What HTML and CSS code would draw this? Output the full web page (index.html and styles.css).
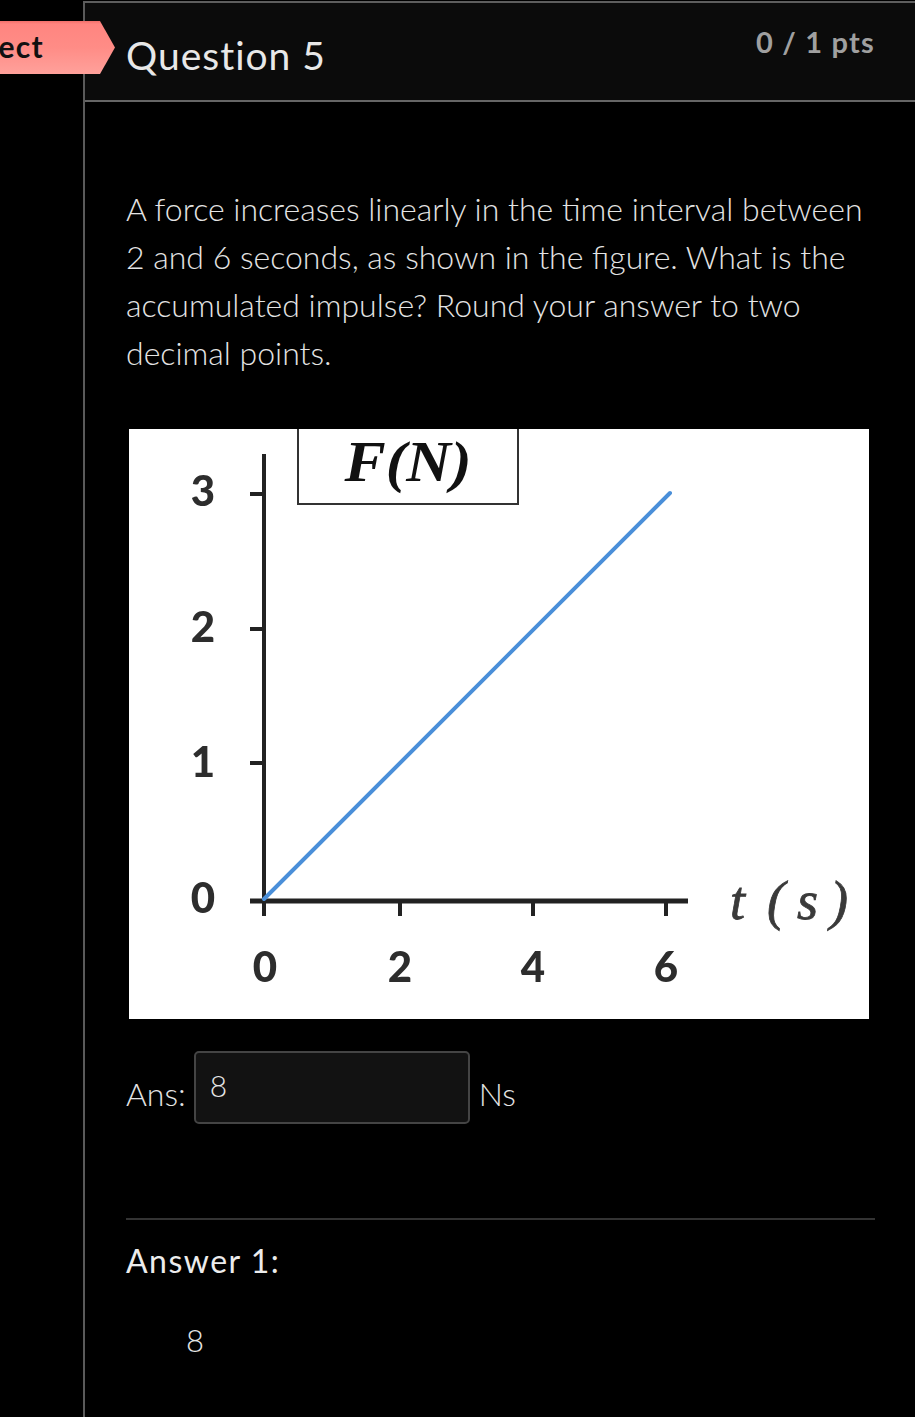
FILE: index.html
```html
<!DOCTYPE html>
<html lang="en">
<head>
<meta charset="utf-8">
<title>Question 5</title>
<link rel="stylesheet" href="styles.css">
</head>
<body>
<div class="page">
  <div class="tag"><span class="tag-text">Incorrect</span></div>
  <div class="gutter"></div>
  <div class="question">
    <div class="header">
      <h2 class="title">Question 5</h2>
      <div class="pts">0 / 1 pts</div>
    </div>
    <div class="content">
      <p class="text">A force increases linearly in the time interval between 2 and 6 seconds, as shown in the figure. What is the accumulated impulse? Round your answer to two decimal points.</p>
      <div class="figure">
        <svg class="graph" width="740" height="590" viewBox="0 0 740 590" xmlns="http://www.w3.org/2000/svg">
          <rect x="0" y="0" width="740" height="590" fill="#ffffff"/>
          <g class="blur">
            <rect x="169" y="-2" width="220" height="77" fill="none" stroke="#333" stroke-width="2"/>
            <text x="279" y="52" class="fn" text-anchor="middle" textLength="127" lengthAdjust="spacingAndGlyphs">F(N)</text>
            <line x1="135" y1="25" x2="135" y2="487" stroke="#222" stroke-width="4"/>
            <line x1="121" y1="472" x2="559" y2="472" stroke="#222" stroke-width="5"/>
            <line x1="121" y1="65" x2="135" y2="65" stroke="#222" stroke-width="4"/>
            <line x1="121" y1="200" x2="135" y2="200" stroke="#222" stroke-width="4"/>
            <line x1="121" y1="334" x2="135" y2="334" stroke="#222" stroke-width="4"/>
            <line x1="271" y1="472" x2="271" y2="487" stroke="#222" stroke-width="4"/>
            <line x1="404" y1="472" x2="404" y2="487" stroke="#222" stroke-width="4"/>
            <line x1="537" y1="472" x2="537" y2="487" stroke="#222" stroke-width="4"/>
            <line x1="135" y1="470" x2="541" y2="64" stroke="#4a8fd9" stroke-width="4" stroke-linecap="round"/>
            <text class="num" x="74" y="77" text-anchor="middle">3</text>
            <text class="num" x="74" y="213" text-anchor="middle">2</text>
            <text class="num" x="74" y="348" text-anchor="middle">1</text>
            <text class="num" x="74" y="484" text-anchor="middle">0</text>
            <text class="num" x="136" y="553" text-anchor="middle">0</text>
            <text class="num" x="271" y="553" text-anchor="middle">2</text>
            <text class="num" x="404" y="553" text-anchor="middle">4</text>
            <text class="num" x="537" y="553" text-anchor="middle">6</text>
            <text class="ts" x="601" y="490">t</text>
            <text class="ts" x="638" y="490" textLength="81" lengthAdjust="spacing">(s)</text>
          </g>
        </svg>
      </div>
      <div class="ans-row">
        <span class="label">Ans:</span>
        <div class="input">8</div>
        <span class="unit">Ns</span>
      </div>
      <hr class="divider">
      <div class="answer-title">Answer 1:</div>
      <div class="answer-value">8</div>
    </div>
  </div>
</div>
</body>
</html>
```
FILE: styles.css
```css
html, body {
  margin: 0;
  padding: 0;
  background: #000;
}
body {
  font-family: Lato, "Open Sans", sans-serif;
  color: #e6e6e6;
}
.page {
  position: relative;
  display: flex;
  min-height: 1417px;
  overflow: hidden;
}
.gutter {
  width: 83px;
  flex: none;
}
.question {
  flex: 1;
  margin-top: 1px;
  border-top: 2px solid #5e5e5e;
  border-left: 2px solid #5a5a5a;
}
.header {
  height: 97px;
  background: #0b0b0b;
  border-bottom: 2px solid #666;
  display: flex;
  justify-content: space-between;
  align-items: flex-start;
  padding: 0 40px 0 41px;
}
.title {
  margin: 0;
  padding-top: 30px;
  font-size: 39px;
  font-weight: 400;
  letter-spacing: 1px;
  line-height: 44px;
  color: #e8e8e8;
}
.pts {
  padding-top: 21px;
  font-size: 29px;
  font-weight: 700;
  letter-spacing: 1.2px;
  line-height: 36px;
  color: #a0a0a0;
}
.tag {
  position: absolute;
  left: 0;
  top: 21px;
  width: 115px;
  height: 53px;
  background: linear-gradient(#f26e69 0, #ff8580 3px, #ff8c86 50%, #ffa19b 100%);
  clip-path: polygon(0 0, 100px 0, 115px 50%, 100px 100%, 0 100%);
  display: flex;
  justify-content: flex-end;
  align-items: center;
  padding-right: 71px;
  box-sizing: border-box;
  z-index: 2;
}
.tag-text {
  white-space: nowrap;
  font-size: 30px;
  font-weight: 700;
  letter-spacing: 1.3px;
  color: #111;
  margin-top: -4px;
}
.content {
  padding: 83px 40px 0 41px;
}
.text {
  margin: 0;
  font-size: 32px;
  font-weight: 300;
  line-height: 48px;
  color: #e4e4e4;
}
.figure {
  margin: 52px 0 0 3px;
}
.graph {
  display: block;
}
.blur {
  filter: blur(0.7px);
}
.fn {
  font-family: "Liberation Serif", serif;
  font-style: italic;
  font-weight: 700;
  font-size: 56px;
  fill: #111;
}
.ts {
  font-family: "Liberation Serif", serif;
  font-style: italic;
  font-weight: 400;
  font-size: 54px;
  fill: #3a3a3a;
  stroke: #3a3a3a;
  stroke-width: 0.8px;
}
.num {
  font-family: Lato, sans-serif;
  font-weight: 900;
  font-size: 42px;
  fill: #2d2d2d;
}
.ans-row {
  display: flex;
  align-items: flex-end;
  margin-top: 32px;
}
.label, .unit {
  font-size: 32px;
  font-weight: 300;
  line-height: 48px;
  margin-bottom: 6px;
  color: #e4e4e4;
}
.label {
  margin-right: 8px;
}
.unit {
  margin-left: 9px;
}
.input {
  width: 272px;
  height: 69px;
  box-sizing: content-box;
  border: 2px solid #444;
  border-radius: 5px;
  background: #121212;
  font-size: 30px;
  font-weight: 300;
  line-height: 36px;
  padding: 0;
  text-indent: 14px;
  color: #e8e8e8;
}
.input::first-line {
  line-height: 64px;
}
.divider {
  margin: 94px 0 0 0;
  border: 0;
  height: 2px;
  background: #333;
}
.answer-title {
  margin-top: 18px;
  font-size: 32px;
  font-weight: 400;
  letter-spacing: 1.5px;
  line-height: 45px;
  color: #ececec;
}
.answer-value {
  margin-top: 35px;
  padding-left: 60px;
  font-size: 31px;
  font-weight: 300;
  line-height: 45px;
  color: #e4e4e4;
}
```
